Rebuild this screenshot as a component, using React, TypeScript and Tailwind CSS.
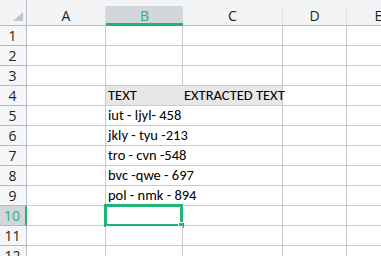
const GREEN = '#21b573';

const cols = [
  { name: 'A', w: 'w-[79px]' },
  { name: 'B', w: 'w-[77px]' },
  { name: 'C', w: 'w-[100px]' },
  { name: 'D', w: 'w-[64px]' },
  { name: 'E', w: 'w-[64px]' },
];

const data: Record<number, string> = {
  5: 'iut - ljyl- 458',
  6: 'jkly - tyu -213',
  7: 'tro - cvn -548',
  8: 'bvc -qwe - 697',
  9: 'pol - nmk - 894',
};

const cellFont = { fontFamily: 'Carlito, Lato, "Liberation Sans", sans-serif' };
const headFont = { fontFamily: '"Open Sans", "Noto Sans", sans-serif' };

function HeaderRow() {
  return (
    <div className="flex h-[26px] bg-[#f3f4f6]">
      {/* corner */}
      <div className="relative w-[27px] shrink-0 border-r border-b border-[#b6bbc4]">
        <svg className="absolute left-[13px] top-[12px]" width="10" height="9" viewBox="0 0 10 9">
          <polygon points="10,0 10,9 0,9" fill="#c3c6cc" />
        </svg>
      </div>
      {cols.map((c) => (
        <div key={c.name} className={`${c.w} shrink-0 flex flex-col`}>
          <div className="h-[6px]" />
          {c.name === 'B' ? (
            <div
              className="flex-1 flex items-center justify-center bg-[#d3d6dc] border-b-[3px] border-[#21b573] text-[14px] leading-none text-[#21b573]"
              style={headFont}
            >
              <span className="mt-[2px]">{c.name}</span>
            </div>
          ) : (
            <div
              className="flex-1 flex items-center justify-center border-r border-b border-r-[#dcdfe5] border-b-[#b6bbc4] text-[14px] leading-none text-[#222]"
              style={headFont}
            >
              <span className="mt-[1px]">{c.name}</span>
            </div>
          )}
        </div>
      ))}
    </div>
  );
}

function Row({ n }: { n: number }) {
  const active = n === 10;
  return (
    <div className="flex h-[20px]">
      <div
        className={`w-[27px] shrink-0 flex items-center justify-center border-b border-[#b6bbc4] text-[14px] leading-none ${
          active
            ? 'bg-[#d3d6dc] text-[#21b573] border-r-2 border-r-[#21b573]'
            : 'bg-[#f5f6f8] text-[#222] border-r border-r-[#b6bbc4]'
        }`}
        style={headFont}
      >
        <span className="mr-[1px]">{n}</span>
      </div>
      {/* A */}
      <div className="w-[79px] shrink-0 border-r border-b border-[#c6cad3] bg-white" />
      {n === 4 ? (
        <>
          <div
            className="w-[77px] shrink-0 flex items-end pl-[2px] pb-[1px] border-b border-b-[#c6cad3] bg-[#e7e7e7] text-[14.5px] leading-[17px] text-black"
            style={cellFont}
          >
            TEXT
          </div>
          <div
            className="w-[100px] shrink-0 flex items-end pl-[1px] pb-[1px] border-r border-b border-[#c6cad3] bg-[#e7e7e7] text-[14.5px] leading-[17px] text-black whitespace-nowrap overflow-visible z-10"
            style={cellFont}
          >
            EXTRACTED TEXT
          </div>
        </>
      ) : data[n] ? (
        <div
          className="w-[177px] shrink-0 flex items-end pl-[2px] pb-[1px] border-r border-b border-[#c6cad3] bg-white text-[14.5px] leading-[17px] text-black whitespace-nowrap"
          style={cellFont}
        >
          {data[n]}
        </div>
      ) : (
        <>
          <div className="relative w-[77px] shrink-0 border-r border-b border-[#c6cad3] bg-white">
            {active && (
              <>
                <div className="absolute left-[-2px] top-[-2px] w-[79px] h-[23px] border-[3px] border-[#21b573]" />
                <div className="absolute left-[72px] top-[16px] w-[6px] h-[6px] bg-[#21b573] border-l border-t border-white" />
              </>
            )}
          </div>
          <div className="w-[100px] shrink-0 border-r border-b border-[#c6cad3] bg-white" />
        </>
      )}
      <div className="w-[64px] shrink-0 border-r border-b border-[#c6cad3] bg-white" />
      <div className="w-[64px] shrink-0 border-r border-b border-[#c6cad3] bg-white" />
    </div>
  );
}

export default function App() {
  return (
    <div className="w-[381px] h-[256px] overflow-hidden bg-white">
      <HeaderRow />
      {Array.from({ length: 12 }, (_, i) => (
        <Row key={i + 1} n={i + 1} />
      ))}
    </div>
  );
}
